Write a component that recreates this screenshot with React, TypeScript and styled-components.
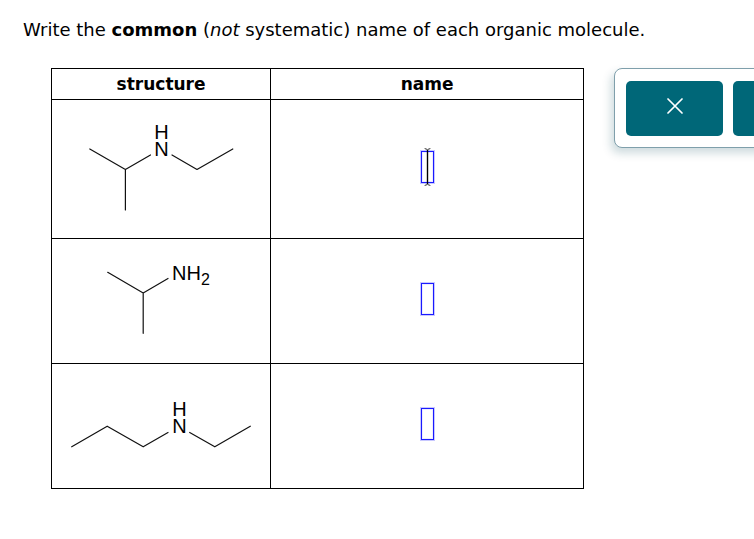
import React from "react";
import styled, { createGlobalStyle } from "styled-components";

const GlobalStyle = createGlobalStyle`
  body {
    margin: 0;
    background: #fff;
    color: #000;
    font-family: "DejaVu Sans", Verdana, sans-serif;
    overflow-x: hidden;
  }
`;

const Page = styled.main`
  padding: 18px 0 50px 23px;
  overflow: hidden;
`;

const Prompt = styled.p`
  margin: 0;
  font-size: 18px;
  line-height: 24px;
`;

const Workspace = styled.div`
  display: grid;
  grid-template-columns: minmax(0, 1fr) 140px;
  column-gap: 30px;
  align-items: start;
  margin: 26px 0 0 28px;
`;

const AnswerTable = styled.table`
  width: 100%;
  border-collapse: collapse;
  table-layout: fixed;
`;

const HeadCell = styled.th<{ $wide?: boolean }>`
  width: ${(p) => (p.$wide ? "auto" : "41%")};
  height: 30px;
  padding: 0;
  border: 1px solid #000;
  font-size: 17px;
  line-height: 24px;
`;

const StructureCell = styled.td`
  padding: 0;
  border: 1px solid #000;
`;

const NameCell = styled.td`
  padding: 0 0 4px;
  border: 1px solid #000;
  text-align: center;
  vertical-align: middle;
`;

const Drawing = styled.svg`
  display: block;
  margin: 0 auto;
  fill: none;
  stroke: #111;
  stroke-width: 1.2;
  stroke-linecap: round;
  stroke-linejoin: round;

  text {
    fill: #000;
    stroke: none;
    font-family: "Liberation Sans", Arial, sans-serif;
    font-size: 20px;
  }

  tspan {
    font-size: 16px;
  }
`;

const Field = styled.span`
  position: relative;
  display: inline-block;
  vertical-align: middle;
`;

const NameInput = styled.input`
  display: block;
  box-sizing: border-box;
  width: 13px;
  height: 32px;
  padding: 0;
  border: 1px solid #1a1aff;
  border-radius: 0;
  outline: none;
  background: #fff;
  box-shadow: 0 0 0 1px #c8c8ff, inset 0 0 0 1px #ececff;
`;

const Caret = styled.svg`
  position: absolute;
  left: 3px;
  top: -3px;
  pointer-events: none;
`;

const ActionPanel = styled.aside`
  display: flex;
  gap: 10px;
  box-sizing: border-box;
  width: 228px;
  padding: 12px 11px 11px;
  border: 1px solid #7f9fab;
  border-radius: 8px;
  background: #fff;
  box-shadow: -3px 5px 10px rgba(0, 70, 85, 0.2);
`;

const ActionButton = styled.button`
  display: flex;
  flex: 1 0 97px;
  align-items: center;
  justify-content: center;
  height: 55px;
  padding: 0 0 5px;
  border: 0;
  border-radius: 5px;
  background: #006778;
  color: #fff;
`;

type Molecule = {
  label: string;
  height: number;
  viewBox: string;
  bonds: string;
  atoms: React.ReactNode;
};

const molecules: Molecule[] = [
  {
    label: "isopropyl and ethyl groups on NH",
    height: 138,
    viewBox: "52 100 219 138",
    bonds:
      "M89.8 149L125.4 169.5V210M125.4 169.5L150.5 155M172 155L197 169.5L232.8 149",
    atoms: (
      <>
        <text x="161.5" y="139" textAnchor="middle">H</text>
        <text x="161.5" y="156" textAnchor="middle">N</text>
      </>
    ),
  },
  {
    label: "isopropyl group on NH2",
    height: 124,
    viewBox: "52 239 219 124",
    bonds: "M107.7 272.3L143.2 293V333.3M143.2 293L168 278.5",
    atoms: (
      <text x="172" y="280">
        NH<tspan dy="5">2</tspan>
      </text>
    ),
  },
  {
    label: "propyl and ethyl groups on NH",
    height: 124,
    viewBox: "52 364 219 124",
    bonds:
      "M71.7 446.8L107.2 426.2L143.2 446.8L168 432.5M189.7 432.5L214.8 446.8L250.3 426.2",
    atoms: (
      <>
        <text x="179.5" y="416" textAnchor="middle">H</text>
        <text x="179.5" y="433" textAnchor="middle">N</text>
      </>
    ),
  },
];

export default function App() {
  return (
    <>
      <GlobalStyle />
      <Page>
        <Prompt>
          Write the <b>common</b> (<i>not</i> systematic) name of each organic
          molecule.
        </Prompt>
        <Workspace>
          <AnswerTable>
            <thead>
              <tr>
                <HeadCell scope="col">structure</HeadCell>
                <HeadCell scope="col" $wide>name</HeadCell>
              </tr>
            </thead>
            <tbody>
              {molecules.map((m, i) => (
                <tr key={m.label}>
                  <StructureCell>
                    <Drawing
                      width="219"
                      height={m.height}
                      viewBox={m.viewBox}
                      role="img"
                      aria-label={m.label}
                    >
                      <path d={m.bonds} />
                      {m.atoms}
                    </Drawing>
                  </StructureCell>
                  <NameCell>
                    <Field>
                      <NameInput type="text" aria-label={`Name of molecule ${i + 1}`} />
                      {i === 0 && (
                        <Caret width="7" height="38" viewBox="0 0 7 38" aria-hidden="true">
                          <path d="M3.5 1V37" stroke="#000" strokeWidth="1.4" />
                          <path
                            d="M.5 .5H2.5M4.5 .5H6.5M1.5 1.5H5.5M1.5 36.5H5.5M.5 37.5H2.5M4.5 37.5H6.5"
                            stroke="#777"
                          />
                        </Caret>
                      )}
                    </Field>
                  </NameCell>
                </tr>
              ))}
            </tbody>
          </AnswerTable>
          <ActionPanel>
            <ActionButton type="button" aria-label="Clear">
              <svg width="16" height="16" viewBox="0 0 16 16" aria-hidden="true">
                <path
                  d="M1 1L15 15M15 1L1 15"
                  stroke="currentColor"
                  strokeWidth="1.7"
                  strokeLinecap="round"
                />
              </svg>
            </ActionButton>
            <ActionButton type="button" aria-label="Undo" />
          </ActionPanel>
        </Workspace>
      </Page>
    </>
  );
}
